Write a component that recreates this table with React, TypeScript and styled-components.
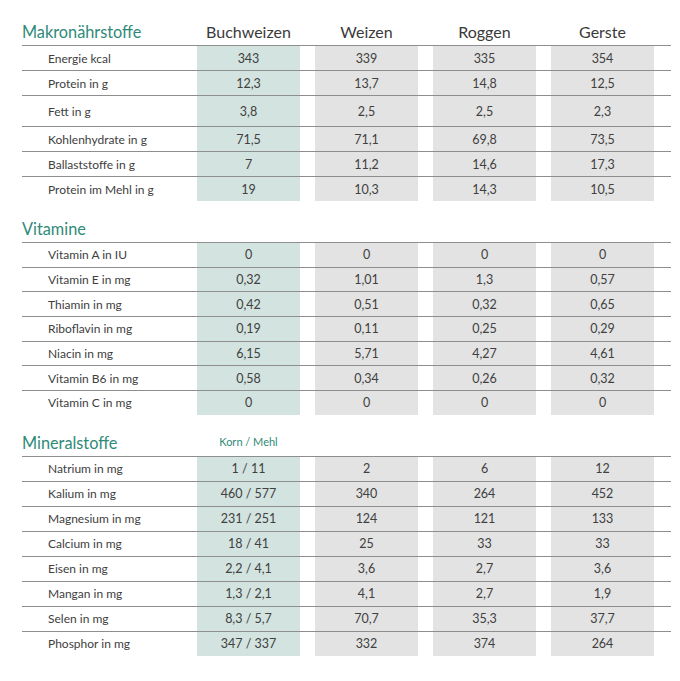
import React from "react";
import styled, { createGlobalStyle } from "styled-components";

const Global = createGlobalStyle`
  html, body { margin: 0; padding: 0; background: #fff; }
  body { font-family: Lato, "Open Sans", sans-serif; color: #404040; }
`;

const TEAL = "#2f8a78";
const GREEN = "#d3e3df";
const GREY = "#e3e3e3";
const LINE = "#8e8e8e";

const Page = styled.div`
  width: 680px;
  height: 681px;
  padding: 0 9px 0 22px;
  box-sizing: border-box;
`;

const Grid = styled.div`
  display: grid;
  grid-template-columns: 160px repeat(4, 103px);
  column-gap: 15px;
  padding-right: 17px;
`;

const HeadRow = styled(Grid)<{ $h: number }>`
  height: ${(p) => p.$h}px;
  align-items: end;
  padding-bottom: 5px;
  box-sizing: border-box;
`;

const SectionTitle = styled.div`
  font-size: 16.3px;
  color: ${TEAL};
  white-space: nowrap;
  line-height: 1;
`;

const ColTitle = styled.div`
  font-size: 16px;
  color: #3a3a3a;
  text-align: center;
  line-height: 1;
`;

const SubTitle = styled.div`
  font-size: 11px;
  color: ${TEAL};
  text-align: center;
  line-height: 1;
  padding-bottom: 4px;
`;

const Row = styled(Grid)<{ $h: number }>`
  height: ${(p) => p.$h}px;
  border-top: 1px solid ${LINE};
  box-sizing: border-box;
`;

const Label = styled.div`
  font-size: 12px;
  padding-left: 26px;
  display: flex;
  align-items: center;
  white-space: nowrap;
`;

const Cell = styled.div<{ $hl?: boolean }>`
  background: ${(p) => (p.$hl ? GREEN : GREY)};
  font-size: 12.5px;
  display: flex;
  align-items: center;
  justify-content: center;
`;

type Section = {
  title: string;
  headH: number;
  cols?: string[];
  sub?: string;
  rowH: number;
  rows: { label: string; v: string[]; h?: number }[];
};

const sections: Section[] = [
  {
    title: "Makronährstoffe",
    headH: 45,
    cols: ["Buchweizen", "Weizen", "Roggen", "Gerste"],
    rowH: 25,
    rows: [
      { label: "Energie kcal", v: ["343", "339", "335", "354"] },
      { label: "Protein in g", v: ["12,3", "13,7", "14,8", "12,5"] },
      { label: "Fett in g", v: ["3,8", "2,5", "2,5", "2,3"], h: 31 },
      { label: "Kohlenhydrate in g", v: ["71,5", "71,1", "69,8", "73,5"] },
      { label: "Ballaststoffe in g", v: ["7", "11,2", "14,6", "17,3"] },
      { label: "Protein im Mehl in g", v: ["19", "10,3", "14,3", "10,5"] },
    ],
  },
  {
    title: "Vitamine",
    headH: 41,
    rowH: 24.7,
    rows: [
      { label: "Vitamin A in IU", v: ["0", "0", "0", "0"] },
      { label: "Vitamin E in mg", v: ["0,32", "1,01", "1,3", "0,57"] },
      { label: "Thiamin in mg", v: ["0,42", "0,51", "0,32", "0,65"] },
      { label: "Riboflavin in mg", v: ["0,19", "0,11", "0,25", "0,29"] },
      { label: "Niacin in mg", v: ["6,15", "5,71", "4,27", "4,61"] },
      { label: "Vitamin B6 in mg", v: ["0,58", "0,34", "0,26", "0,32"] },
      { label: "Vitamin C in mg", v: ["0", "0", "0", "0"] },
    ],
  },
  {
    title: "Mineralstoffe",
    headH: 41,
    sub: "Korn / Mehl",
    rowH: 25,
    rows: [
      { label: "Natrium in mg", v: ["1 / 11", "2", "6", "12"] },
      { label: "Kalium in mg", v: ["460 / 577", "340", "264", "452"] },
      { label: "Magnesium in mg", v: ["231 / 251", "124", "121", "133"] },
      { label: "Calcium in mg", v: ["18 / 41", "25", "33", "33"] },
      { label: "Eisen in mg", v: ["2,2 / 4,1", "3,6", "2,7", "3,6"] },
      { label: "Mangan in mg", v: ["1,3 / 2,1", "4,1", "2,7", "1,9"] },
      { label: "Selen in mg", v: ["8,3 / 5,7", "70,7", "35,3", "37,7"] },
      { label: "Phosphor in mg", v: ["347 / 337", "332", "374", "264"] },
    ],
  },
];

export default function App() {
  return (
    <Page>
      <Global />
      {sections.map((s) => (
        <React.Fragment key={s.title}>
          <HeadRow $h={s.headH}>
            <SectionTitle>{s.title}</SectionTitle>
            {s.cols
              ? s.cols.map((c) => <ColTitle key={c}>{c}</ColTitle>)
              : s.sub && <SubTitle>{s.sub}</SubTitle>}
          </HeadRow>
          {s.rows.map((r) => (
            <Row key={r.label} $h={r.h ?? s.rowH}>
              <Label>{r.label}</Label>
              {r.v.map((v, i) => (
                <Cell key={i} $hl={i === 0}>
                  {v}
                </Cell>
              ))}
            </Row>
          ))}
        </React.Fragment>
      ))}
    </Page>
  );
}
